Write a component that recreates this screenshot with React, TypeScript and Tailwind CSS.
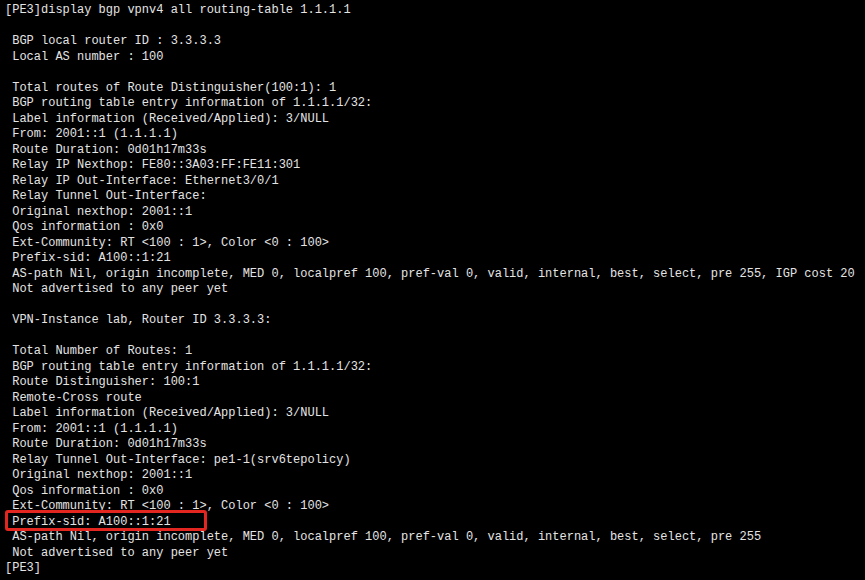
import React from "react";

const block1 = [
  "[PE3]display bgp vpnv4 all routing-table 1.1.1.1",
  "",
  " BGP local router ID : 3.3.3.3",
  " Local AS number : 100",
  "",
  " Total routes of Route Distinguisher(100:1): 1",
  " BGP routing table entry information of 1.1.1.1/32:",
  " Label information (Received/Applied): 3/NULL",
  " From: 2001::1 (1.1.1.1)",
  " Route Duration: 0d01h17m33s",
  " Relay IP Nexthop: FE80::3A03:FF:FE11:301",
  " Relay IP Out-Interface: Ethernet3/0/1",
  " Relay Tunnel Out-Interface:",
  " Original nexthop: 2001::1",
  " Qos information : 0x0",
  " Ext-Community: RT <100 : 1>, Color <0 : 100>",
  " Prefix-sid: A100::1:21",
  " AS-path Nil, origin incomplete, MED 0, localpref 100, pref-val 0, valid, internal, best, select, pre 255, IGP cost 20",
  " Not advertised to any peer yet",
  "",
  " VPN-Instance lab, Router ID 3.3.3.3:",
  "",
  " Total Number of Routes: 1",
  " BGP routing table entry information of 1.1.1.1/32:",
  " Route Distinguisher: 100:1",
  " Remote-Cross route",
  " Label information (Received/Applied): 3/NULL",
  " From: 2001::1 (1.1.1.1)",
  " Route Duration: 0d01h17m33s",
  " Relay Tunnel Out-Interface: pe1-1(srv6tepolicy)",
  " Original nexthop: 2001::1",
  " Qos information : 0x0",
  " Ext-Community: RT <100 : 1>, Color <0 : 100>",
];

const block2 = [
  " AS-path Nil, origin incomplete, MED 0, localpref 100, pref-val 0, valid, internal, best, select, pre 255",
  " Not advertised to any peer yet",
  "[PE3]",
];

const App = () => {
  return (
    <div className="h-[580px] w-[865px] overflow-hidden bg-black">
      <pre className="pl-[5px] pt-[3px] font-['Liberation_Mono',monospace] text-[12px] leading-[15.5px] text-[#e4e4e4]">
        {block1.map((line, i) => (
          <div key={i}>{line || " "}</div>
        ))}
        {/* highlighted line */}
        <div className="relative">
          {" Prefix-sid: A100::1:21"}
          <span className="absolute left-0 top-[-5px] h-[21px] w-[202px] rounded-[3px] border-[3px] border-[#e3261f]" />
        </div>
        {block2.map((line, i) => (
          <div key={i}>{line}</div>
        ))}
      </pre>
    </div>
  );
};

export default App;
